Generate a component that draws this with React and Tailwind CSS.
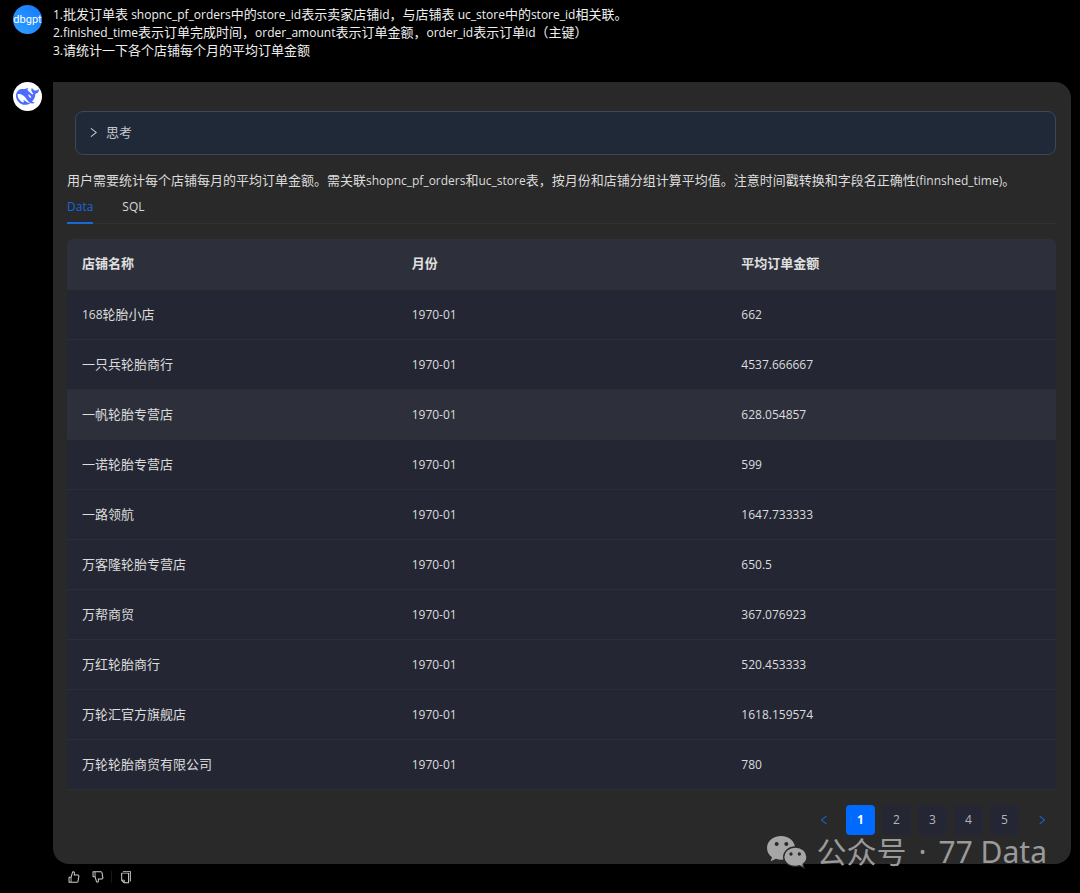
import React, { useState } from 'react';
import {
  AiOutlineCopy,
  AiOutlineDislike,
  AiOutlineLeft,
  AiOutlineLike,
  AiOutlineRight,
} from 'react-icons/ai';

const question = [
  '1.批发订单表 shopnc_pf_orders中的store_id表示卖家店铺id，与店铺表 uc_store中的store_id相关联。',
  '2.finished_time表示订单完成时间，order_amount表示订单金额，order_id表示订单id（主键）',
  '3.请统计一下各个店铺每个月的平均订单金额',
];

const answer =
  '用户需要统计每个店铺每月的平均订单金额。需关联shopnc_pf_orders和uc_store表，按月份和店铺分组计算平均值。注意时间戳转换和字段名正确性(finnshed_time)。';

const columns = ['店铺名称', '月份', '平均订单金额'];

const rows = [
  ['168轮胎小店', '1970-01', '662'],
  ['一只兵轮胎商行', '1970-01', '4537.666667'],
  ['一帆轮胎专营店', '1970-01', '628.054857'],
  ['一诺轮胎专营店', '1970-01', '599'],
  ['一路领航', '1970-01', '1647.733333'],
  ['万客隆轮胎专营店', '1970-01', '650.5'],
  ['万帮商贸', '1970-01', '367.076923'],
  ['万红轮胎商行', '1970-01', '520.453333'],
  ['万轮汇官方旗舰店', '1970-01', '1618.159574'],
  ['万轮轮胎商贸有限公司', '1970-01', '780'],
];

// Latin runs are set one size smaller so they sit evenly beside the Chinese text
const MixedText = ({ text }) =>
  text.split(/([\x20-\x7e]+)/).map((part, i) =>
    i % 2 ? <span key={i} className="text-[12px] leading-none">{part}</span> : part
  );

const DeepSeekLogo = () => (
  <svg viewBox="0 0 24 24" className="w-[23px] h-[23px]" fill="#4d6bfe" aria-hidden="true">
    <path d="M23.748 4.482c-.254-.124-.364.113-.512.234-.051.039-.094.09-.137.136-.372.397-.806.657-1.373.626-.829-.046-1.537.214-2.163.848-.133-.782-.575-1.248-1.247-1.548-.352-.156-.708-.311-.955-.65-.172-.241-.219-.51-.305-.774-.055-.16-.11-.323-.293-.35-.2-.031-.278.136-.356.276-.313.572-.434 1.202-.422 1.84.027 1.436.633 2.58 1.838 3.393.137.093.172.187.129.323-.082.28-.18.552-.266.833-.055.179-.137.217-.329.14a5.526 5.526 0 01-1.736-1.18c-.857-.828-1.631-1.742-2.597-2.458a11.365 11.365 0 00-.689-.471c-.985-.957.13-1.743.388-1.836.27-.098.093-.432-.779-.428-.872.004-1.67.295-2.687.684a3.055 3.055 0 01-.465.137 9.597 9.597 0 00-2.883-.102c-1.885.21-3.39 1.102-4.497 2.623C.082 8.606-.231 10.684.152 12.85c.403 2.284 1.569 4.175 3.36 5.653 1.858 1.533 3.997 2.284 6.438 2.14 1.482-.085 3.133-.284 4.994-1.86.47.234.962.327 1.78.397.63.059 1.236-.03 1.705-.128.735-.156.684-.837.419-.961-2.155-1.004-1.682-.595-2.113-.926 1.096-1.296 2.746-2.642 3.392-7.003.05-.347.007-.565 0-.845-.004-.17.035-.237.23-.256a4.173 4.173 0 001.545-.475c1.396-.763 1.96-2.015 2.093-3.517.02-.23-.004-.467-.247-.588zM11.581 18c-2.089-1.642-3.102-2.183-3.52-2.16-.392.024-.321.471-.235.763.09.288.207.486.371.739.114.167.192.416-.113.603-.673.416-1.842-.14-1.897-.167-1.361-.802-2.5-1.86-3.301-3.307-.774-1.393-1.224-2.887-1.298-4.482-.02-.386.093-.522.477-.592a4.696 4.696 0 011.529-.039c2.132.312 3.946 1.265 5.468 2.774.868.86 1.525 1.887 2.202 2.891.72 1.066 1.494 2.082 2.48 2.914.348.292.625.514.891.677-.802.09-2.14.11-3.054-.614zm1-6.44a.306.306 0 01.415-.287.302.302 0 01.2.288.306.306 0 01-.31.307.303.303 0 01-.304-.308zm3.11 1.596c-.2.081-.399.151-.59.16a1.245 1.245 0 01-.798-.254c-.274-.23-.47-.358-.552-.758a1.73 1.73 0 01.016-.588c.07-.327-.008-.537-.239-.727-.187-.156-.426-.199-.688-.199a.559.559 0 01-.254-.078c-.11-.054-.2-.19-.114-.358.028-.054.16-.186.192-.21.356-.202.767-.136 1.146.016.352.144.618.408 1.001.782.391.451.462.576.685.914.176.265.336.537.445.848.067.195-.019.354-.25.452z" />
  </svg>
);

const WeChatLogo = () => (
  <svg viewBox="0 0 126 102" className="w-[42px] h-[34px]" fill="#a6a6a6" aria-hidden="true">
    <path d="M45 3C21 3 3 19 3 39c0 11 6 21 15 28l-4 12 16-8c5 2 10 3 15 3 24 0 42-15 42-35S69 3 45 3z" />
    <path
      d="M88 36c20 0 35 13 35 30 0 9-5 17-12 22l3 11-13-7c-4 1-8 2-13 2-20 0-35-12-35-28s15-30 35-30z"
      stroke="#292929"
      strokeWidth="4"
    />
    <g fill="#292929">
      <circle cx="32" cy="27" r="6" />
      <circle cx="61" cy="27" r="6" />
      <circle cx="75" cy="57" r="5" />
      <circle cx="100" cy="57" r="5" />
    </g>
  </svg>
);

const Tabs = ({ active, onChange }) => (
  <div role="tablist" className="flex gap-[29px] border-b border-[#303030] text-[12px] leading-[18px]">
    {['Data', 'SQL'].map((tab) => (
      <button
        key={tab}
        role="tab"
        aria-selected={active === tab}
        onClick={() => onChange(tab)}
        className={`pb-[6px] -mb-px border-b-2 ${
          active === tab ? 'border-[#1668dc] text-[#1668dc]' : 'border-transparent text-[#d9d9d9]'
        }`}
      >
        {tab}
      </button>
    ))}
  </div>
);

const ResultTable = () => (
  <table className="w-full table-fixed border-separate border-spacing-0 text-left">
    <thead>
      <tr>
        {columns.map((col) => (
          <th
            key={col}
            className="h-[51px] px-[15px] pb-[3px] bg-[#2d303b] border-b border-[#303030] font-bold text-[#e0e0e0] first:rounded-tl-md last:rounded-tr-md"
          >
            {col}
          </th>
        ))}
      </tr>
    </thead>
    <tbody>
      {rows.map((row, i) => (
        <tr key={row[0]} className={i === 2 ? 'bg-[#2d303b]' : 'bg-[#242733]'}>
          {row.map((cell, j) => (
            <td key={j} className="h-[50px] px-[15px] pb-px border-b border-[#2d2e33] text-[#dcdcdc]">
              <MixedText text={cell} />
            </td>
          ))}
        </tr>
      ))}
    </tbody>
  </table>
);

const Pagination = ({ page, onChange }) => (
  <nav aria-label="分页" className="mt-[15px] flex justify-end gap-2 text-[12px]">
    <button
      aria-label="上一页"
      onClick={() => onChange(Math.max(1, page - 1))}
      className="flex h-[30px] w-[29px] items-center justify-center text-[#1668dc]"
    >
      <AiOutlineLeft size={12} />
    </button>
    <div className="flex gap-[7px]">
      {[1, 2, 3, 4, 5].map((n) => (
        <button
          key={n}
          onClick={() => onChange(n)}
          className={`h-[30px] w-[29px] rounded-[4px] ${
            n === page ? 'bg-[#0069fe] font-bold text-white' : 'bg-[#242733] text-[#b4b5b9]'
          }`}
        >
          {n}
        </button>
      ))}
    </div>
    <button
      aria-label="下一页"
      onClick={() => onChange(Math.min(5, page + 1))}
      className="flex h-[30px] w-[29px] items-center justify-center text-[#1668dc]"
    >
      <AiOutlineRight size={12} />
    </button>
  </nav>
);

const App = () => {
  const [tab, setTab] = useState('Data');
  const [page, setPage] = useState(1);

  return (
    <div className="min-h-screen bg-black pl-[13px] pr-[9px] pt-[5px] font-['Open_Sans','Noto_Sans_CJK_SC',sans-serif] text-[13px] leading-[18px] text-[#dcdcdc]">
      {/* User question */}
      <div className="flex items-start gap-[11px]">
        <div className="flex h-[29px] w-[29px] shrink-0 items-center justify-center overflow-hidden rounded-full bg-linear-to-bl from-[#1677ff] to-[#30a2ff] text-[11px] text-white font-[Roboto,sans-serif]">
          dbgpt
        </div>
        <div className="text-[#f0f0f0]">
          {question.map((line) => (
            <p key={line}>
              <MixedText text={line} />
            </p>
          ))}
        </div>
      </div>

      {/* Model answer */}
      <div className="mt-[23px] flex items-start gap-[11px]">
        <div className="flex h-[29px] w-[29px] shrink-0 items-center justify-center rounded-full bg-white">
          <DeepSeekLogo />
        </div>
        <div className="min-w-0 flex-1">
          <div className="relative rounded-2xl rounded-tl-none bg-[#292929] pb-[29px] pl-[14px] pr-[15px] pt-[29px]">
            <button className="ml-2 flex h-[44px] w-[calc(100%-8px)] items-center gap-[6px] rounded-lg border border-[#3d4755] bg-[#1f2937] px-[11px] pb-[2px] text-[#c3c7cd]">
              <AiOutlineRight size={13} />
              思考
            </button>
            <p className="mt-4 mb-[9px]">
              <MixedText text={answer} />
            </p>
            <Tabs active={tab} onChange={setTab} />
            <div className="mt-[15px]">
              <ResultTable />
            </div>
            <Pagination page={page} onChange={setPage} />

            {/* Account watermark over the card's corner */}
            <div className="pointer-events-none absolute -bottom-2 right-6 flex items-center gap-2 text-[30px] leading-[40px] text-[#9a9a9a] font-['Noto_Sans','Noto_Sans_CJK_SC',sans-serif]">
              <WeChatLogo />
              <div className="flex gap-3">
                <span>公众号</span>
                <span>·</span>
                <span>77 Data</span>
              </div>
            </div>
          </div>

          <div className="mt-[6px] flex items-center pl-[14px] text-[#d0d0d0]">
            <button aria-label="赞"><AiOutlineLike size={14} /></button>
            <button aria-label="踩" className="ml-[10px]"><AiOutlineDislike size={14} /></button>
            <span className="ml-[6px] h-3 w-px bg-[#1a1a14]" />
            <button aria-label="复制" className="ml-[7px]"><AiOutlineCopy size={14} /></button>
          </div>
        </div>
      </div>
    </div>
  );
};

export default App;
